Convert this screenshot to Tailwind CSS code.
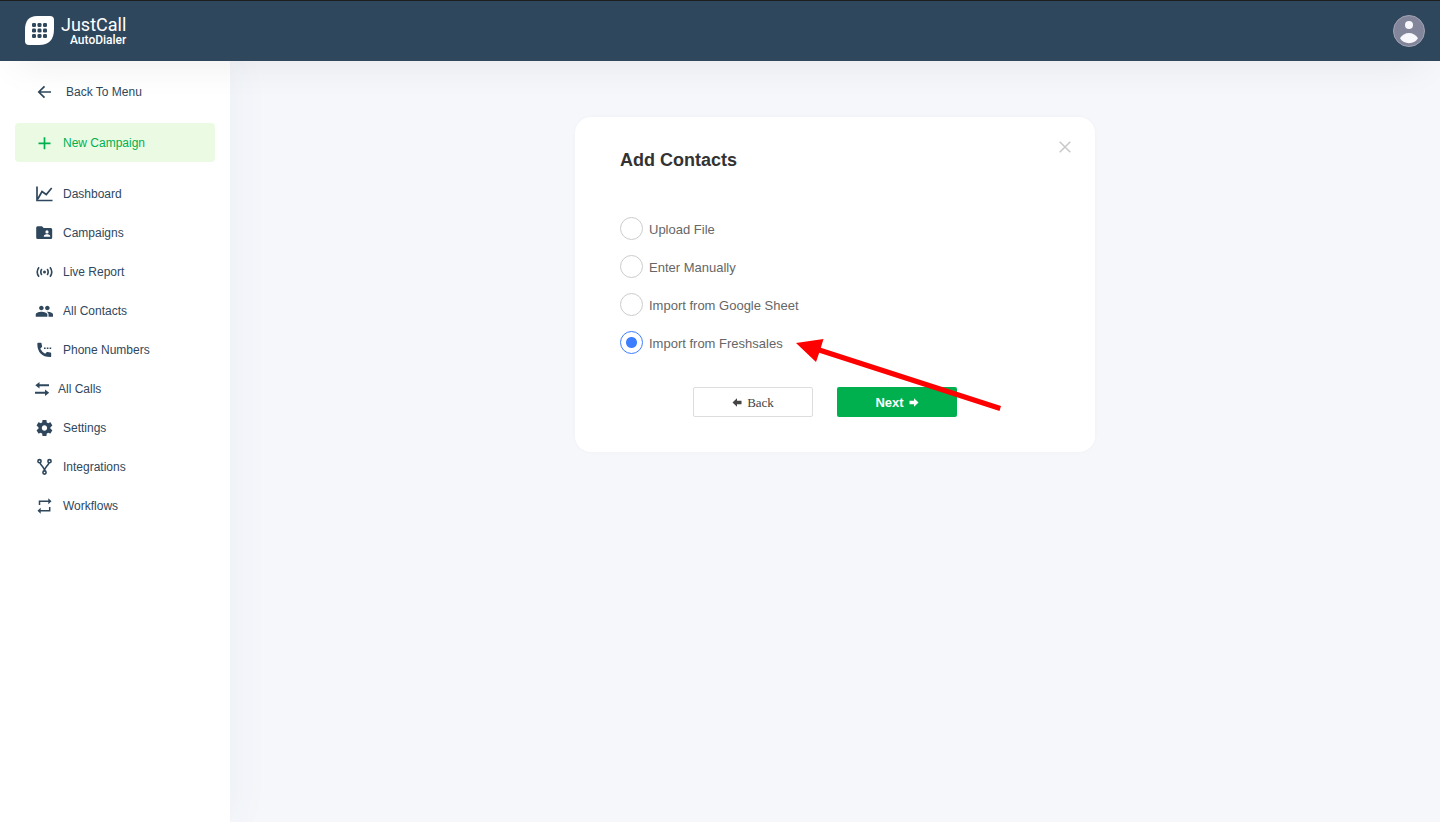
<!DOCTYPE html>
<html lang="en">
<head>
<meta charset="utf-8">
<meta name="viewport" content="width=device-width, initial-scale=1">
<title>JustCall AutoDialer</title>
<script src="https://cdn.jsdelivr.net/npm/@tailwindcss/browser@4"></script>
</head>
<body class="flex min-h-screen flex-col bg-[#f5f7fb] font-['Liberation_Sans',Arial,sans-serif] text-[#2f475c]">
<header class="relative z-20 flex h-[61px] items-center justify-between border-t border-[#1e1e1e] bg-[#2f475c] pr-[15px] pl-[25px] shadow-[0_16px_40px_-16px_rgba(0,0,0,0.09)]">
  <a href="#" class="flex items-center gap-[6px] text-white">
    <svg class="h-[30px] w-[30px]" viewBox="0 0 30 30" aria-hidden="true">
      <path fill="#fff" d="M12 0H25Q29 0 29 4V13Q29 29 14 29H4Q0 29 0 25V14Q0 0 12 0Z"/>
      <g fill="#2f475c"><rect x="7" y="7" width="4" height="4" rx="1.3"/><rect x="12.500" y="7" width="4" height="4" rx="1.3"/><rect x="18" y="7" width="4" height="4" rx="1.3"/><rect x="7" y="12.500" width="4" height="4" rx="1.3"/><rect x="12.500" y="12.500" width="4" height="4" rx="1.3"/><rect x="18" y="12.500" width="4" height="4" rx="1.3"/><rect x="7" y="18" width="4" height="4" rx="1.3"/><rect x="12.500" y="18" width="4" height="4" rx="1.3"/><rect x="18" y="18" width="4" height="4" rx="1.3"/></g>
    </svg>
    <span class="flex flex-col items-end font-['Roboto',sans-serif]">
      <span class="text-[18px] leading-[18px]">JustCall</span>
      <span class="text-[12px] leading-[12px] font-medium">AutoDialer</span>
    </span>
  </a>
  <button type="button" aria-label="Account" class="rounded-full">
    <svg class="h-8 w-8" viewBox="0 0 32 32"><circle cx="16" cy="16" r="15.500" fill="#83869b" stroke="#a1a3b3"/><circle cx="16" cy="10" r="4" fill="#f7f7fc"/><path fill="#f7f7fc" d="M7 23.300C9 20 12.400 18 16 18s7 2 9 5.300C23 26.600 19.600 28.200 16 28.200S9 26.600 7 23.300Z"/></svg>
  </button>
</header>
<div class="flex flex-1">
  <nav class="z-10 w-[230px] shrink-0 bg-white px-[15px] pt-[11px] text-[12px] font-medium shadow-[0_0_40px_rgba(70,80,120,0.06)]">
    <a href="#" class="flex h-[39px] items-center gap-[13px] pl-5"><svg class="h-[18px] w-[18px]" viewBox="0 0 18 18" fill="none" stroke="currentColor" stroke-width="1.7"><path d="M16 9H4M9.500 3.300 3.800 9l5.700 5.700"/></svg>Back To Menu</a>
    <a href="#" class="my-3 flex h-[39px] items-center gap-[10px] rounded bg-[#ebfbe3] pl-5 text-[#00b04f]"><svg class="h-[18px] w-[18px]" viewBox="0 0 18 18" fill="none" stroke="currentColor" stroke-width="1.7"><path d="M9.500 3.300v12M3.500 9.300h12"/></svg>New Campaign</a>
    <a href="#" class="flex h-[39px] items-center gap-[10px] pl-5"><svg class="h-[18px] w-[18px]" viewBox="0 0 18 18" fill="none" stroke="currentColor" stroke-width="1.700"><path d="M2 1.500V15.500H17.500M2.800 14 7 6.500l4.300 3L16.700 3"/></svg>Dashboard</a>
    <a href="#" class="flex h-[39px] items-center gap-[10px] pl-5"><svg class="h-[18px] w-[18px]" viewBox="0 0 18 18"><path fill="currentColor" d="M2.500 2.300H7l1.700 1.700h7q1.500 0 1.500 1.500v8q0 1.500-1.500 1.500H2.700q-1.500 0-1.500-1.500V3.800q0-1.500 1.300-1.500Z"/><circle cx="12" cy="7.900" r="1.600" fill="#fff"/><path fill="#fff" d="M8.800 12.700v-.8c0-1.100 2.100-1.700 3.200-1.700s3.200.6 3.200 1.700v.8Z"/></svg>Campaigns</a>
    <a href="#" class="flex h-[39px] items-center gap-[10px] pl-5"><svg class="h-[18px] w-[18px]" viewBox="0 0 18 18" fill="none" stroke="currentColor" stroke-width="1.600"><circle cx="9.500" cy="9" r="1.500" fill="currentColor" stroke="none"/><path d="M6.800 6Q4.800 9 6.800 12M12.200 6Q14.200 9 12.200 12M4 4.200Q.4 9 4 13.800M15 4.200Q18.600 9 15 13.800"/></svg>Live Report</a>
    <a href="#" class="flex h-[39px] items-center gap-[10px] pl-5"><svg class="h-[18px] w-[18px]" viewBox="0 0 24 24" fill="currentColor"><path d="M16.500 11c1.660 0 3-1.340 3-3s-1.340-3-3-3-3 1.340-3 3 1.340 3 3 3zm-8 0c1.660 0 3-1.340 3-3s-1.340-3-3-3-3 1.340-3 3 1.340 3 3 3zm0 2C6.170 13 1 14.170 1 16.500V19.500h15.500v-3C16.500 14.170 10.830 13 8.500 13zm8 0c-.29 0-.62.02-.97.050 1.160.84 2.500 1.970 2.500 3.450v3H24v-3c0-2.330-5.170-3.500-7.500-3.500z"/></svg>All Contacts</a>
    <a href="#" class="flex h-[39px] items-center gap-[10px] pl-5"><svg class="h-[18px] w-[18px]" viewBox="0 0 18 18"><path fill="currentColor" d="M3.300 1.800H5.700q.8 0 .9.800.1 1.500.5 2.600.1.500-.2.900L5.200 7.800q1.800 3.300 5 5l1.700-1.700q.4-.3.900-.2 1.100.4 2.600.5.800.1.800.9v2.900q0 .9-.9.900Q2.500 15.700 2.300 2.700 2.300 1.800 3.300 1.800Z"/><path fill="currentColor" d="M9 6.500h1.600v1.600H9zM11.800 6.500h1.600v1.600h-1.600zM14.600 6.500h1.600v1.600h-1.600z"/></svg>Phone Numbers</a>
    <a href="#" class="flex h-[39px] items-center gap-[5px] pl-5"><svg class="h-[18px] w-[18px]" viewBox="0 0 18 18"><path fill="currentColor" d="M4.500 2v2.200H14v2H4.500v2.200L.3 5.200ZM10 9.500v2.200H0v2H10v2.200L14.200 12.700Z"/></svg>All Calls</a>
    <a href="#" class="flex h-[39px] items-center gap-[10px] pl-5"><svg class="h-[18px] w-[18px]" viewBox=".7 1.300 21.500 21.500" fill="currentColor"><path d="M19.140 12.940c.04-.3.060-.61.060-.94 0-.32-.02-.64-.07-.94l2.030-1.580c.18-.14.23-.41.12-.61l-1.920-3.320c-.12-.22-.37-.29-.59-.22l-2.390.96c-.5-.38-1.030-.7-1.620-.94l-.36-2.540c-.04-.24-.24-.41-.48-.41h-3.840c-.24 0-.43.17-.47.41l-.36 2.540c-.59.24-1.130.57-1.620.94l-2.390-.96c-.22-.08-.47 0-.59.22L2.740 8.870c-.12.21-.08.47.12.61l2.030 1.580c-.05.3-.09.63-.09.94s.02.64.07.94l-2.030 1.580c-.18.14-.23.41-.12.61l1.920 3.320c.12.22.37.29.59.22l2.390-.96c.5.38 1.030.7 1.620.94l.36 2.540c.05.24.24.41.48.41h3.840c.24 0 .44-.17.47-.41l.36-2.540c.59-.24 1.130-.56 1.620-.94l2.390.96c.22.08.47 0 .59-.22l1.920-3.320c.12-.22.07-.47-.12-.61l-2.010-1.580zM12 15.200c-1.770 0-3.200-1.430-3.200-3.200s1.430-3.200 3.200-3.200 3.200 1.430 3.200 3.200-1.430 3.200-3.200 3.200z"/></svg>Settings</a>
    <a href="#" class="flex h-[39px] items-center gap-[10px] pl-5"><svg class="h-[18px] w-[18px]" viewBox="0 0 18 18" fill="none" stroke="currentColor" stroke-width="1.600"><circle cx="4.500" cy="3.200" r="1.600"/><circle cx="14.500" cy="3.200" r="1.600"/><circle cx="9.500" cy="14.500" r="1.600"/><path d="M5 5Q5.300 6 7.500 8.500T9.500 13M14 5Q13.700 6 11.500 8.500T9.500 13"/></svg>Integrations</a>
    <a href="#" class="flex h-[39px] items-center gap-[10px] pl-5"><svg class="h-[18px] w-[18px]" viewBox="0 0 18 18"><path fill="none" stroke="currentColor" stroke-width="1.500" d="M4.500 8V4.300H14M14.700 10v3.700H5"/><path fill="currentColor" d="M13.300 1.300 16.500 4.300 13.300 7.300ZM5.700 10.700 2.500 13.700 5.700 16.700Z"/></svg>Workflows</a>
  </nav>
  <main class="flex flex-1 items-start justify-center pt-14">
    <form class="relative w-[520px] rounded-[16px] bg-white pt-[31px] pr-[65px] pb-[35px] pl-[45px] shadow-[0_0_4px_rgba(0,0,0,0.03)]">
      <h1 class="text-[18px] leading-6 font-bold text-[#333]">Add Contacts</h1>
      <button type="button" aria-label="Close" class="absolute top-[23px] right-[23px] text-[#c8c8c8]"><svg class="h-[14px] w-[14px]" viewBox="0 0 14 14" fill="none" stroke="currentColor" stroke-width="1.500"><path d="m1.700 1.700 10.600 10.600M12.300 1.700 1.700 12.300"/></svg></button>
      <div class="mt-[37px] flex flex-col text-[13px] font-medium text-[#666]">
        <label class="flex h-[38px] items-center gap-[6px]"><input type="radio" name="source" class="h-[23px] w-[23px] appearance-none rounded-full border border-[#ccc] checked:border-[#3d7eff] checked:bg-[radial-gradient(circle,#3d7eff_5px,transparent_6px)]"><span class="pt-[3px]">Upload File</span></label>
        <label class="flex h-[38px] items-center gap-[6px]"><input type="radio" name="source" class="h-[23px] w-[23px] appearance-none rounded-full border border-[#ccc] checked:border-[#3d7eff] checked:bg-[radial-gradient(circle,#3d7eff_5px,transparent_6px)]"><span class="pt-[3px]">Enter Manually</span></label>
        <label class="flex h-[38px] items-center gap-[6px]"><input type="radio" name="source" class="h-[23px] w-[23px] appearance-none rounded-full border border-[#ccc] checked:border-[#3d7eff] checked:bg-[radial-gradient(circle,#3d7eff_5px,transparent_6px)]"><span class="pt-[3px]">Import from Google Sheet</span></label>
        <label class="flex h-[38px] items-center gap-[6px]"><input type="radio" name="source" checked class="h-[23px] w-[23px] appearance-none rounded-full border border-[#ccc] checked:border-[#3d7eff] checked:bg-[radial-gradient(circle,#3d7eff_5px,transparent_6px)]"><span class="pt-[3px]">Import from Freshsales</span></label>
      </div>
      <div class="mt-[26px] flex justify-center gap-6">
        <button type="button" class="flex h-[30px] w-[120px] items-center justify-center gap-[5px] rounded-[2px] border border-[#ddd] bg-white pt-px font-['Liberation_Serif',serif] text-[13px] text-[#444]"><svg class="h-[10px] w-[10px]" viewBox="0 0 10 10" fill="currentColor"><path d="M5 .3V2.800H9.500V6.200H5V8.700L.5 4.500Z"/></svg>Back</button>
        <button type="button" class="flex h-[30px] w-[120px] items-center justify-center gap-[5px] rounded-[2px] bg-[#00b04f] pt-px text-[13px] font-bold text-white">Next<svg class="h-[10px] w-[10px]" viewBox="0 0 10 10" fill="currentColor"><path d="M5 .3V2.800H.5V6.200H5V8.700L9.500 4.500Z"/></svg></button>
      </div>
      <svg class="pointer-events-none absolute top-[220px] left-[220px] h-[76px] w-[208px]" viewBox="0 0 208 76" aria-hidden="true"><path fill="red" d="M1 6 28.500 2 25.800 10.700 206 69 204.500 74 24.200 15.800 21 25Z"/></svg>
    </form>
  </main>
</div>
</body>
</html>
